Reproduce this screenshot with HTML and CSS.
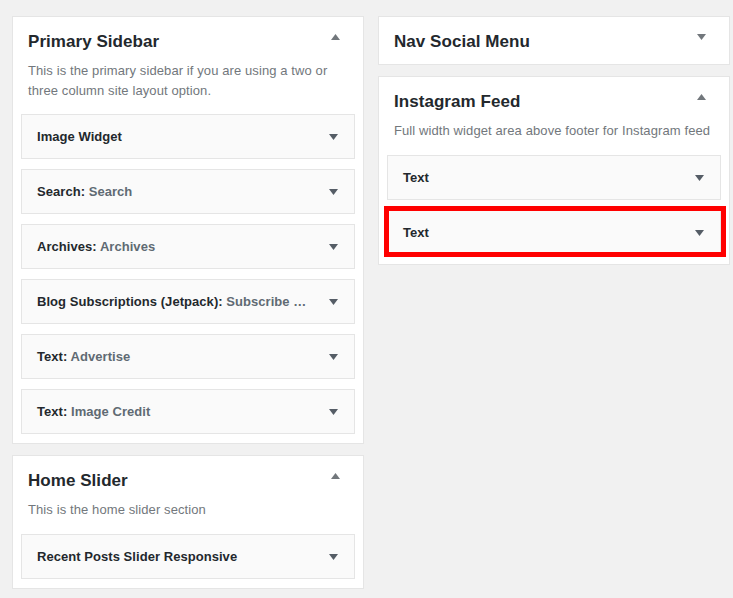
FILE: index.html
```html
<!DOCTYPE html>
<html lang="en">
<head>
<meta charset="utf-8">
<title>Widgets</title>
<link rel="stylesheet" href="styles.css">
</head>
<body>
<div class="columns">
  <div class="column">
    <section class="panel has-widgets">
      <div class="panel-head">
        <h2 class="panel-title">Primary Sidebar</h2>
        <svg class="toggle" width="9" height="6" viewBox="0 0 9 6"><polygon points="0,6 9,6 4.5,0"/></svg>
      </div>
      <p class="panel-desc">This is the primary sidebar if you are using a two or three column site layout option.</p>
      <div class="widgets">
        <div class="widget"><span class="widget-title">Image Widget</span><svg class="arrow" width="9" height="6" viewBox="0 0 9 6"><polygon points="0,0 9,0 4.5,6"/></svg></div>
        <div class="widget"><span class="widget-title">Search: <span class="sub">Search</span></span><svg class="arrow" width="9" height="6" viewBox="0 0 9 6"><polygon points="0,0 9,0 4.5,6"/></svg></div>
        <div class="widget"><span class="widget-title">Archives: <span class="sub">Archives</span></span><svg class="arrow" width="9" height="6" viewBox="0 0 9 6"><polygon points="0,0 9,0 4.5,6"/></svg></div>
        <div class="widget"><span class="widget-title">Blog Subscriptions (Jetpack): <span class="sub">Subscribe …</span></span><svg class="arrow" width="9" height="6" viewBox="0 0 9 6"><polygon points="0,0 9,0 4.5,6"/></svg></div>
        <div class="widget"><span class="widget-title">Text: <span class="sub">Advertise</span></span><svg class="arrow" width="9" height="6" viewBox="0 0 9 6"><polygon points="0,0 9,0 4.5,6"/></svg></div>
        <div class="widget"><span class="widget-title">Text: <span class="sub">Image Credit</span></span><svg class="arrow" width="9" height="6" viewBox="0 0 9 6"><polygon points="0,0 9,0 4.5,6"/></svg></div>
      </div>
    </section>
    <section class="panel has-widgets">
      <div class="panel-head">
        <h2 class="panel-title">Home Slider</h2>
        <svg class="toggle" width="9" height="6" viewBox="0 0 9 6"><polygon points="0,6 9,6 4.5,0"/></svg>
      </div>
      <p class="panel-desc">This is the home slider section</p>
      <div class="widgets">
        <div class="widget"><span class="widget-title">Recent Posts Slider Responsive</span><svg class="arrow" width="9" height="6" viewBox="0 0 9 6"><polygon points="0,0 9,0 4.5,6"/></svg></div>
      </div>
    </section>
  </div>
  <div class="column">
    <section class="panel">
      <div class="panel-head">
        <h2 class="panel-title">Nav Social Menu</h2>
        <svg class="toggle" width="9" height="6" viewBox="0 0 9 6"><polygon points="0,0 9,0 4.5,6"/></svg>
      </div>
    </section>
    <section class="panel has-widgets">
      <div class="panel-head">
        <h2 class="panel-title">Instagram Feed</h2>
        <svg class="toggle" width="9" height="6" viewBox="0 0 9 6"><polygon points="0,6 9,6 4.5,0"/></svg>
      </div>
      <p class="panel-desc">Full width widget area above footer for Instagram feed</p>
      <div class="widgets">
        <div class="widget"><span class="widget-title">Text</span><svg class="arrow" width="9" height="6" viewBox="0 0 9 6"><polygon points="0,0 9,0 4.5,6"/></svg></div>
        <div class="widget highlighted"><span class="widget-title">Text</span><svg class="arrow" width="9" height="6" viewBox="0 0 9 6"><polygon points="0,0 9,0 4.5,6"/></svg></div>
      </div>
    </section>
  </div>
</div>
</body>
</html>
```

FILE: styles.css
```css
* { box-sizing: border-box; }

body {
  margin: 0;
  background: #f1f1f1;
  font-family: "Liberation Sans", Arial, sans-serif;
  color: #23282d;
}

.columns {
  display: flex;
  align-items: flex-start;
  gap: 14px;
  padding: 16px 0 0 12px;
}

.column {
  width: 352px;
  display: flex;
  flex-direction: column;
  gap: 11px;
}

.panel {
  background: #fff;
  border: 1px solid #e5e5e5;
  padding: 13px 0 10px;
}

.panel.has-widgets {
  padding-bottom: 9px;
}

.panel-head {
  display: flex;
  justify-content: space-between;
  align-items: flex-start;
  padding: 0 23px 0 15px;
}

.panel-title {
  margin: 0;
  font-size: 17px;
  font-weight: bold;
  line-height: 24px;
  letter-spacing: 0.05px;
  color: #23282d;
}

.toggle {
  display: block;
  margin-top: 4px;
  fill: #72777c;
}

.panel-desc {
  margin: 7px 15px 0;
  font-size: 13px;
  line-height: 19.5px;
  letter-spacing: 0.1px;
  color: #72777c;
}

.widgets {
  margin: 14px 8px 0;
  display: flex;
  flex-direction: column;
  gap: 10px;
}

.widget {
  position: relative;
  height: 45px;
  display: flex;
  align-items: center;
  justify-content: space-between;
  padding: 0 16px 0 15px;
  background: #fafafa;
  border: 1px solid #e5e5e5;
}

.widget-title {
  font-size: 13px;
  font-weight: bold;
  letter-spacing: 0.05px;
  color: #23282d;
  white-space: nowrap;
}

.sub {
  color: #606a73;
}

.arrow {
  display: block;
  fill: #555d66;
  margin-top: 1px;
}

.highlighted::after {
  content: "";
  position: absolute;
  left: -4px;
  right: -6px;
  top: -5px;
  bottom: -3px;
  border: 5px solid #ff0000;
  pointer-events: none;
}
```
